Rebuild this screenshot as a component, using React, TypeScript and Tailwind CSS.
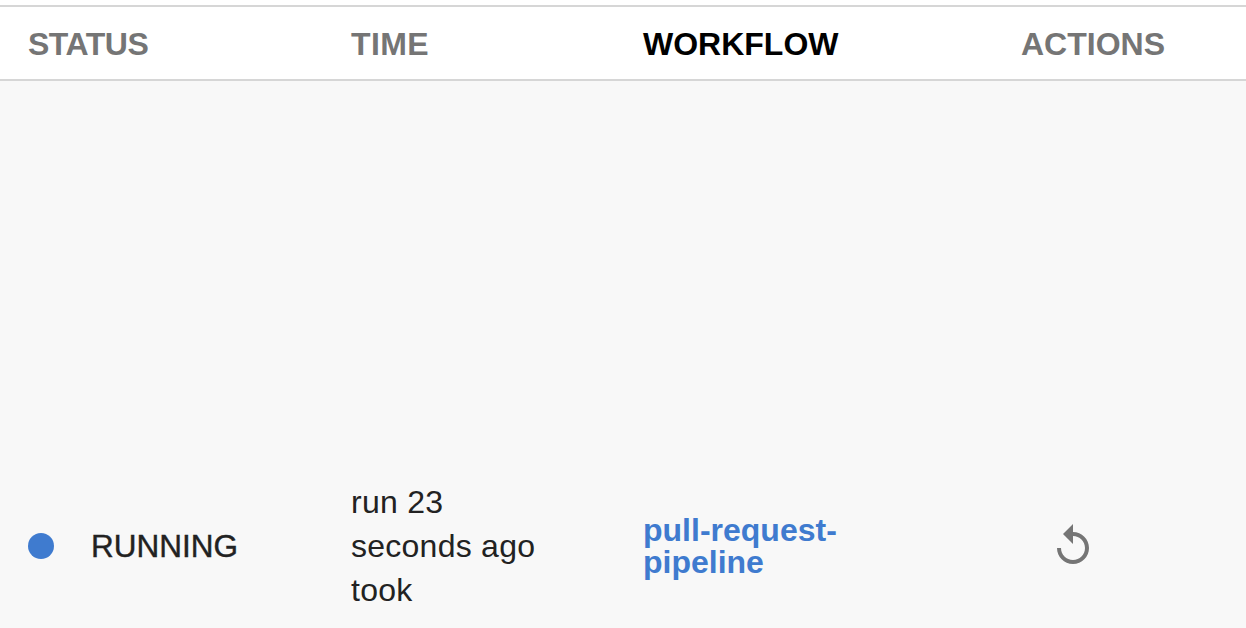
import React from "react";

function RerunIcon() {
  return (
    <svg width="48" height="48" viewBox="0 0 24 24" className="text-[#757575]" fill="currentColor">
      <path d="M12 5V1L7 6l5 5V7c3.31 0 6 2.69 6 6s-2.69 6-6 6-6-2.69-6-6H4c0 4.42 3.58 8 8 8s8-3.58 8-8-3.58-8-8-8z" />
    </svg>
  );
}

export default function App() {
  return (
    <div className="h-[628px] w-full overflow-hidden bg-[#f8f8f8] font-['Liberation_Sans',sans-serif]">
      {/* header */}
      <div className="bg-white pt-[5px]">
        <div className="flex h-[76px] items-center border-y-2 border-[#d6d6d6] pt-0.5 text-[32px] font-bold text-[#757575]">
          <div className="w-[323px] pl-7 tracking-[-0.5px]">STATUS</div>
          <div className="w-[292px] pl-7 tracking-[0.4px]">TIME</div>
          <div className="w-[378px] pl-7 text-black">WORKFLOW</div>
          <div className="pl-7">ACTIONS</div>
        </div>
      </div>

      {/* row */}
      <div className="mt-[399px] flex h-[132px] items-center">
        <div className="flex w-[323px] items-center pl-7">
          <span className="h-[26px] w-[26px] rounded-full bg-[#3f7bcf]" />
          <span className="mt-0.5 ml-[37px] text-[31.5px] text-[#222222] [-webkit-text-stroke:0.4px_#222222]">RUNNING</span>
        </div>
        <div className="w-[292px] pl-7 text-[32px] leading-[44px] tracking-[0.25px] text-[#222222]">
          <div>run 23</div>
          <div>seconds ago</div>
          <div>took</div>
        </div>
        <div className="w-[378px] pl-7 text-[32px] leading-[32px] font-bold text-[#3f7bcf]">
          <div>pull-request-</div>
          <div>pipeline</div>
        </div>
        <div className="pl-[56px]">
          <RerunIcon />
        </div>
      </div>
    </div>
  );
}
